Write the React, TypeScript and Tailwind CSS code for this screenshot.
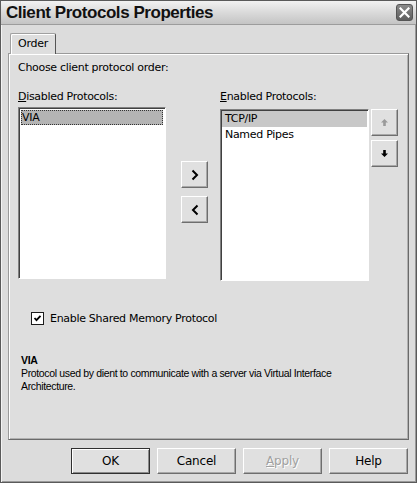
import type { ReactNode } from "react";

const font = "font-['DejaVu_Sans',sans-serif]";

const raised =
  "border border-t-white border-l-white border-r-[#6e6e6e] border-b-[#6e6e6e] bg-[#e0e0e0] shadow-[inset_-1px_-1px_0_#a8a8a8]";

const sunken =
  "border border-t-[#808080] border-l-[#808080] border-r-white border-b-white bg-white shadow-[inset_1px_1px_0_#404040]";

const SmallButton = ({ children }: { children: ReactNode }) => (
  <div className={`flex h-[27px] w-[27px] items-center justify-center ${raised}`}>
    {children}
  </div>
);

const DialogButton = ({
  children,
  primary = false,
}: {
  children: ReactNode;
  primary?: boolean;
}) => (
  <div
    className={`flex h-[26px] w-[79px] items-center justify-center text-[12px] tracking-[-0.2px] ${
      primary
        ? "border border-[#303030] bg-[#e0e0e0] shadow-[inset_1px_1px_0_white,inset_-1px_-1px_0_#8a8a8a]"
        : raised
    }`}
  >
    {children}
  </div>
);

export default function App() {
  return (
    <div
      className={`flex h-[483px] w-[417px] flex-col border border-[#5a5a5a] bg-[#dcdcdc] text-[11px] tracking-[-0.3px] text-black shadow-[inset_1px_1px_0_#f4f4f4,inset_-1px_-1px_0_#9a9a9a] ${font}`}
    >
      {/* title bar */}
      <div className="flex h-[24px] shrink-0 items-center justify-between border-b border-[#9c9c9c] bg-gradient-to-b from-[#f2f2f2] via-[#dadada] to-[#c4c4c4] pl-[5px] pr-[3px]">
        <span className="font-['Liberation_Sans',sans-serif] text-[17px] font-bold leading-none tracking-[-0.45px] text-[#111]">
          Client Protocols Properties
        </span>
        <div className="flex h-[17px] w-[17px] items-center justify-center rounded-[3px] border border-[#555] bg-gradient-to-b from-[#8a8a8a] to-[#5e5e5e]">
          <svg width="11" height="11" viewBox="0 0 11 11">
            <path d="M1.5 1.5 L9.5 9.5 M9.5 1.5 L1.5 9.5" stroke="white" strokeWidth="2.2" strokeLinecap="square" />
          </svg>
        </div>
      </div>

      {/* tab area */}
      <div className="flex flex-1 flex-col px-[7px] pt-[8px]">
        <div className="flex">
          <div className="relative z-10 ml-[2px] -mb-px flex h-[21px] w-[46px] items-center justify-center rounded-t-[2px] border border-b-0 border-t-[#a0a0a0] border-l-[#a0a0a0] border-r-[#555] bg-[#dedede] shadow-[inset_1px_1px_0_white]">
            Order
          </div>
        </div>
        <div className="flex h-[387px] flex-col border border-t-[#9a9a9a] border-l-[#9a9a9a] border-r-[#6a6a6a] border-b-[#6a6a6a] bg-[#dedede] px-[9px] pt-[7px] shadow-[inset_1px_1px_0_white,inset_-1px_-1px_0_#b0b0b0]">
          <div className="leading-[13px]">Choose client protocol order:</div>

          <div className="mt-[16px] flex">
            {/* disabled list */}
            <div className="flex w-[148px] flex-col">
              <div className="leading-[13px]">
                <span className="underline">D</span>isabled Protocols:
              </div>
              <div className={`mt-[4px] h-[172px] p-[2px] ${sunken}`}>
                <div className="h-[15px] border border-dotted border-[#333] bg-[#b4b4b4] leading-[13px]">
                  VIA
                </div>
              </div>
            </div>

            {/* move buttons */}
            <div className="ml-[15px] flex flex-col gap-[8px] pt-[71px]">
              <SmallButton>
                <svg width="10" height="12" viewBox="0 0 10 12">
                  <path d="M2.5 1.5 L7 6 L2.5 10.5" fill="none" stroke="black" strokeWidth="2" />
                </svg>
              </SmallButton>
              <SmallButton>
                <svg width="10" height="12" viewBox="0 0 10 12">
                  <path d="M7.5 1.5 L3 6 L7.5 10.5" fill="none" stroke="black" strokeWidth="2" />
                </svg>
              </SmallButton>
            </div>

            {/* enabled list */}
            <div className="ml-[12px] flex w-[149px] flex-col">
              <div className="leading-[13px]">
                <span className="underline">E</span>nabled Protocols:
              </div>
              <div className={`mt-[6px] h-[172px] p-[1px] ${sunken}`}>
                <div className="h-[16px] bg-[#c8c8c8] pl-[3px] leading-[16px]">TCP/IP</div>
                <div className="h-[16px] pl-[3px] leading-[16px]">Named Pipes</div>
              </div>
            </div>

            {/* order buttons */}
            <div className="ml-[2px] flex flex-col gap-[4px] pt-[19px]">
              <SmallButton>
                <svg width="9" height="9" viewBox="0 0 9 9">
                  <path d="M4.5 1 L8 4.5 L5.8 4.5 L5.8 8 L3.2 8 L3.2 4.5 L1 4.5 Z" fill="#9a9a9a" />
                </svg>
              </SmallButton>
              <SmallButton>
                <svg width="9" height="9" viewBox="0 0 9 9">
                  <path d="M4.5 8 L8 4.5 L5.8 4.5 L5.8 1 L3.2 1 L3.2 4.5 L1 4.5 Z" fill="black" />
                </svg>
              </SmallButton>
            </div>
          </div>

          {/* checkbox */}
          <div className="ml-[13px] mt-[31px] flex items-center gap-[6px]">
            <div className="flex h-[13px] w-[13px] items-center justify-center border border-[#1c1c1c] bg-white">
              <svg width="9" height="9" viewBox="0 0 9 9">
                <path d="M1.5 4 L3.5 6.2 L7.5 1.8" fill="none" stroke="black" strokeWidth="1.8" />
              </svg>
            </div>
            <span className="leading-[13px]">Enable Shared Memory Protocol</span>
          </div>

          {/* description */}
          <div className="ml-[3px] mt-[28px] font-['Liberation_Sans',sans-serif] text-[10.5px] tracking-[-0.35px]">
            <div className="font-bold leading-[14px]">VIA</div>
            <div className="leading-[13px]">
              Protocol used by dient to communicate with a server via Virtual Interface
              <br />
              Architecture.
            </div>
          </div>
        </div>

        {/* dialog buttons */}
        <div className="mt-[8px] flex justify-end gap-[7px] pr-[1px]">
          <DialogButton primary>OK</DialogButton>
          <DialogButton>Cancel</DialogButton>
          <DialogButton>
            <span className="text-[#a0a0a0] [text-shadow:1px_1px_0_white]">
              <span className="underline">A</span>pply
            </span>
          </DialogButton>
          <DialogButton>Help</DialogButton>
        </div>
      </div>
    </div>
  );
}
